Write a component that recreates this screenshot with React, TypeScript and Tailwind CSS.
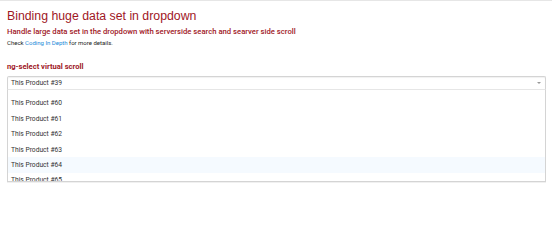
import React from "react";

const rows = [59, 60, 61, 62, 63, 64, 65];

export default function App() {
  return (
    <div className="w-[552px] h-[205px] overflow-hidden bg-white border-t border-[#e6e6e6] pl-[7px] pr-[6px] font-['Roboto',_'Liberation_Sans',_sans-serif]">
      <h1 className="mt-[8px] text-[12.3px] leading-[15px] text-[#a0171f] font-['Liberation_Sans',_sans-serif] font-normal">
        Binding huge data set in dropdown
      </h1>
      <p className="mt-[2.6px] text-[7.7px] leading-[10px] font-medium text-[#a0171f]">
        Handle large data set in the dropdown with serverside search and searver side scroll
      </p>
      <p className="mt-[2.9px] text-[6px] leading-[8px] text-[#222]">
        Check <span className="text-[#1a8ad8]">Coding In Depth</span> for more details.
      </p>
      <div className="mt-[15px] text-[7.6px] leading-[9px] font-bold text-[#a0171f]">
        ng-select virtual scroll
      </div>
      <div className="mt-[4.5px]">
        <div className="h-[14px] flex items-center justify-between border border-[#d4d4d4] border-b-[#e6e6e6] rounded-t-[2px] pl-[3px] pr-[4px] shadow-[inset_0_1px_1px_rgba(0,0,0,0.06)]">
          <span className="text-[6.7px] text-[#333]">This Product #39</span>
          <span className="w-0 h-0 border-l-[2px] border-r-[2px] border-t-[2px] border-l-transparent border-r-transparent border-t-[#999]" />
        </div>
        <div className="h-[92.3px] overflow-hidden border border-t-0 border-[#d4d4d4] shadow-[0_1px_0_rgba(0,0,0,0.06)]">
          <div className="-mt-[9.7px]">
            {rows.map((n) => (
              <div
                key={n}
                className={
                  "h-[15.4px] flex items-center pl-[3px] text-[6.7px] text-[#333] " +
                  (n === 64 ? "bg-[#f5faff]" : "bg-white")
                }
              >
                This Product #{n}
              </div>
            ))}
          </div>
        </div>
      </div>
    </div>
  );
}
